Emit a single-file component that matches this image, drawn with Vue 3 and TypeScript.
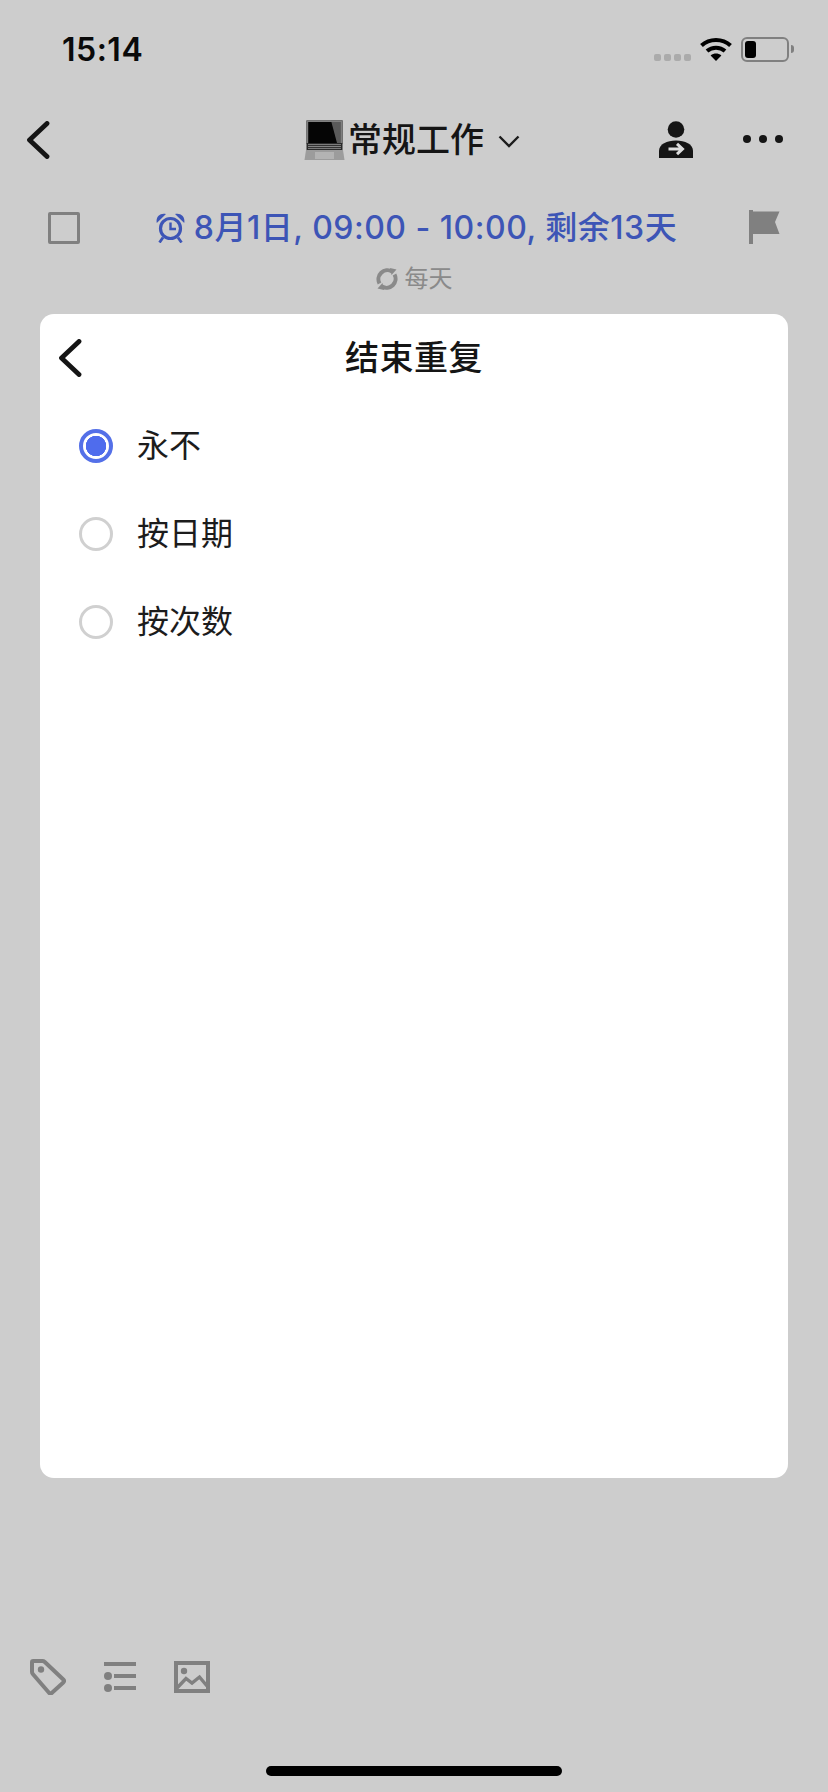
<template>
  <div class="page">
    <!-- status bar -->
    <div class="status-bar">
      <span class="time">15:14</span>
      <div class="status-icons">
        <div class="signal"><i v-for="n in 4" :key="n"></i></div>
        <svg class="wifi" width="32" height="25" viewBox="0 0 32 25">
          <path d="M1.500 8.500C9.500 1 22.500 1 30.500 8.500" fill="none" stroke="#000" stroke-width="4" />
          <path d="M7 14C12 9.600 20 9.600 25 14" fill="none" stroke="#000" stroke-width="4" />
          <path d="M10.600 18.400L16 24L21.400 18.400C18 15.800 14 15.800 10.600 18.400Z" fill="#000" />
        </svg>
        <div class="battery"><div class="battery-level"></div></div>
        <div class="battery-tip"></div>
      </div>
    </div>

    <!-- nav -->
    <div class="nav">
      <svg class="nav-back" width="24" height="38" viewBox="0 0 24 38">
        <path d="M21 2.500L3.500 19L21 35.500" fill="none" stroke="#151515" stroke-width="4.800" stroke-linecap="round" stroke-linejoin="round" />
      </svg>
      <div class="nav-title">
        <svg class="laptop" width="41" height="41" viewBox="0 0 41 41">
          <rect x="2.500" y="0.500" width="36" height="23" fill="#050505" />
          <path d="M27 0.500H38.500V23H33Z" fill="#5a5a5a" />
          <path d="M2.500 0.500H38.500V23.500H36.800V2H4.200V23.500H2.500Z" fill="#808080" />
          <rect x="2.500" y="23" width="36" height="7" fill="#2b2b2b" />
          <path d="M4 24.600H37M4 26.500H37M4 28.400H37" stroke="#8e8e8e" stroke-width="0.900" />
          <path d="M2 30H39L40.500 40H0.500Z" fill="#9c9c9c" />
          <rect x="11" y="32" width="19" height="7" fill="#b3b3b3" />
        </svg>
        <span class="nav-text">常规工作</span>
        <svg class="caret" width="22" height="13" viewBox="0 0 22 13">
          <path d="M1.500 1.500L11 11L20.500 1.500" fill="none" stroke="#1c1c1c" stroke-width="2.400" />
        </svg>
      </div>
      <div class="nav-actions">
        <svg class="person" width="34" height="37" viewBox="0 0 34 37">
          <circle cx="17" cy="8.500" r="8.300" fill="#151515" />
          <path d="M0 37V30C0 23 8 19.500 17 19.500C26 19.500 34 23 34 30V37Z" fill="#151515" />
          <path d="M9.500 28H23M18 22.800L23.500 28L18 33.200" fill="none" stroke="#ddd" stroke-width="3" />
        </svg>
        <div class="dots"><i v-for="n in 3" :key="n"></i></div>
      </div>
    </div>

    <!-- date row -->
    <div class="date-row">
      <div class="checkbox"></div>
      <div class="date">
        <svg class="alarm" width="29" height="30" viewBox="0 0 29 30">
          <circle cx="14.500" cy="15.500" r="10" fill="none" stroke="#3d55b6" stroke-width="3.200" />
          <path d="M14.500 9.500V16H20" fill="none" stroke="#3d55b6" stroke-width="2.400" />
          <path d="M0.800 10C-0.500 4 4 -0.500 10 1ZM28.200 10C29.500 4 25 -0.500 19 1Z" fill="#3d55b6" />
          <path d="M7 24.500L3.500 29.500M22 24.500L25.500 29.500" stroke="#3d55b6" stroke-width="2.800" />
        </svg>
        <span class="date-text">8月1日, 09:00 - 10:00, 剩余13天</span>
      </div>
      <svg class="flag" width="31" height="34" viewBox="0 0 31 34">
        <path d="M0 0H4V34H0Z" fill="#808080" />
        <path d="M4 1.500H30.500L26 12L30.500 24H4Z" fill="#808080" />
      </svg>
    </div>

    <div class="repeat-row">
      <svg width="22" height="22" viewBox="0 0 22 22">
        <path d="M3.500 15.500A9 9 0 0 1 16 3.500M18.500 6.500A9 9 0 0 1 6 18.500" fill="none" stroke="#8a8a8a" stroke-width="4" />
        <path d="M14 0L20.500 1.500L15.500 7ZM8 22L1.500 20.500L6.500 15Z" fill="#8a8a8a" />
      </svg>
      <span>每天</span>
    </div>

    <!-- sheet -->
    <div class="sheet">
      <div class="sheet-head">
        <svg class="sheet-back" width="24" height="38" viewBox="0 0 24 38">
          <path d="M21 2.500L3.500 19L21 35.500" fill="none" stroke="#151515" stroke-width="4.800" stroke-linecap="round" stroke-linejoin="round" />
        </svg>
        <span class="sheet-title">结束重复</span>
      </div>
      <div class="options">
        <div v-for="o in options" :key="o.label" class="option">
          <span class="radio" :class="{ 'radio--on': o.checked }"></span>
          <span class="option-label">{{ o.label }}</span>
        </div>
      </div>
    </div>

    <!-- bottom tools -->
    <div class="tools">
      <svg class="tool-tag" width="36" height="36" viewBox="0 0 36 36">
        <path d="M3.200 2H12.500C13.500 2 14 2.300 14.800 3L33.300 20.500C34.200 21.400 34.200 22.500 33.300 23.500L22 33.800C21 34.700 20 34.700 19 33.800L2.800 15C2.200 14.300 2 13.600 2 12.800V3.200C2 2.500 2.500 2 3.200 2Z" fill="none" stroke="#808080" stroke-width="4" stroke-linejoin="round" />
        <circle cx="11" cy="10.500" r="3.200" fill="#808080" />
      </svg>
      <svg class="tool-list" width="32" height="30" viewBox="0 0 32 30">
        <path d="M0 2H32" stroke="#808080" stroke-width="4" />
        <path d="M10 14H32M10 26H32" stroke="#808080" stroke-width="4" />
        <circle cx="4" cy="14" r="4" fill="#808080" />
        <circle cx="4" cy="26" r="4" fill="#808080" />
      </svg>
      <svg class="tool-image" width="36" height="32" viewBox="0 0 36 32">
        <rect x="2" y="2" width="32" height="28" fill="none" stroke="#808080" stroke-width="4" />
        <circle cx="10" cy="10" r="3.200" fill="#808080" />
        <path d="M3 27L12 17.500L18 22L25.500 16L33 25" fill="none" stroke="#808080" stroke-width="3.400" />
      </svg>
    </div>

    <div class="home-bar"></div>
  </div>
</template>

<script setup lang="ts">
interface Option {
  label: string
  checked: boolean
}

const options: Option[] = [
  { label: '永不', checked: true },
  { label: '按日期', checked: false },
  { label: '按次数', checked: false }
]
</script>

<style>
html,
body {
  margin: 0;
  background: #cdcdcd;
}
</style>

<style scoped>
.page {
  width: 828px;
  height: 1792px;
  box-sizing: border-box;
  background: #cdcdcd;
  display: flex;
  flex-direction: column;
  font-family: Inter, "Noto Sans CJK SC", sans-serif;
  color: #151515;
  overflow: hidden;
}

.status-bar {
  height: 100px;
  flex: none;
  display: flex;
  justify-content: space-between;
  align-items: flex-start;
  padding: 0 34px 0 62px;
  box-sizing: border-box;
}

.time {
  margin-top: 31px;
  font-size: 32px;
  line-height: 38px;
  font-weight: 600;
  color: #0a0a0a;
  letter-spacing: 0.5px;
}

.status-icons {
  display: flex;
  align-items: flex-start;
  margin-top: 37px;
}

.signal {
  display: flex;
  gap: 3px;
  margin-top: 17px;
  margin-right: 9px;
}

.signal i {
  width: 7px;
  height: 7px;
  border-radius: 2px;
  background: #ababab;
}

.wifi {
  margin-right: 9px;
}

.battery {
  width: 48px;
  height: 25px;
  box-sizing: border-box;
  border: 2px solid #808080;
  border-radius: 6px;
  padding: 2px;
}

.battery-level {
  width: 11px;
  height: 17px;
  background: #000;
  border-radius: 3px;
}

.battery-tip {
  width: 3px;
  height: 8px;
  margin: 8px 0 0 2px;
  background: #808080;
  border-radius: 0 3px 3px 0;
}

.nav {
  height: 80px;
  flex: none;
  position: relative;
  display: flex;
  align-items: center;
  justify-content: center;
}

.nav-back {
  position: absolute;
  left: 26px;
  top: 21px;
}

.nav-title {
  display: flex;
  align-items: center;
  margin-left: -4px;
}

.laptop {
  margin-right: 3px;
}

.nav-text {
  font-size: 34px;
  line-height: 44px;
  font-weight: 500;
}

.caret {
  margin-left: 14px;
  margin-top: 2px;
}

.nav-actions {
  position: absolute;
  right: 45px;
  top: 21px;
  display: flex;
  align-items: center;
  gap: 50px;
}

.person {
  display: block;
  margin-left: 2px;
}

.dots {
  display: flex;
  gap: 8px;
  margin-top: -1px;
}

.dots i {
  width: 8px;
  height: 8px;
  border-radius: 50%;
  background: #151515;
}

.date-row {
  flex: none;
  height: 48px;
  margin-top: 24px;
  display: flex;
  align-items: center;
  padding: 0 48px;
  justify-content: space-between;
}

.checkbox {
  width: 32px;
  height: 32px;
  box-sizing: border-box;
  border: 3px solid #808080;
  border-radius: 2px;
}

.date {
  display: flex;
  align-items: center;
  gap: 9px;
  margin-left: 4px;
}

.date-text {
  font-size: 32px;
  line-height: 40px;
  font-weight: 500;
  letter-spacing: 0.5px;
  color: #3d55b6;
  white-space: nowrap;
}

.flag {
  margin-top: -2px;
}

.repeat-row {
  flex: none;
  height: 30px;
  margin-top: 12px;
  display: flex;
  align-items: center;
  justify-content: center;
  gap: 7px;
  font-size: 24px;
  line-height: 30px;
  color: #8a8a8a;
}

.sheet {
  flex: none;
  width: 748px;
  height: 1164px;
  margin: 20px 0 0 40px;
  background: #fff;
  border-radius: 14px;
}

.sheet-head {
  height: 88px;
  position: relative;
  display: flex;
  align-items: center;
  justify-content: center;
}

.sheet-back {
  position: absolute;
  left: 18px;
  top: 25px;
}

.sheet-title {
  font-size: 34px;
  line-height: 44px;
  font-weight: 500;
  letter-spacing: 0.5px;
  color: #151515;
}

.options {
  padding: 0 0 0 39px;
}

.option {
  height: 88px;
  display: flex;
  align-items: center;
  gap: 24px;
}

.radio {
  width: 34px;
  height: 34px;
  box-sizing: border-box;
  border-radius: 50%;
  border: 3px solid #d0d0d0;
  flex: none;
}

.radio--on {
  border: 4px solid #5470e8;
  background: radial-gradient(circle, #4f6ced 0 10px, #fff 10.5px);
}

.option-label {
  font-size: 32px;
  line-height: 40px;
  color: #1c1c1c;
}

.tools {
  flex: none;
  height: 36px;
  margin-top: 181px;
  padding-left: 30px;
  display: flex;
  align-items: center;
  gap: 38px;
}

.home-bar {
  flex: none;
  width: 296px;
  height: 10px;
  margin: 71px 0 0 266px;
  border-radius: 5px;
  background: #000;
}
</style>
